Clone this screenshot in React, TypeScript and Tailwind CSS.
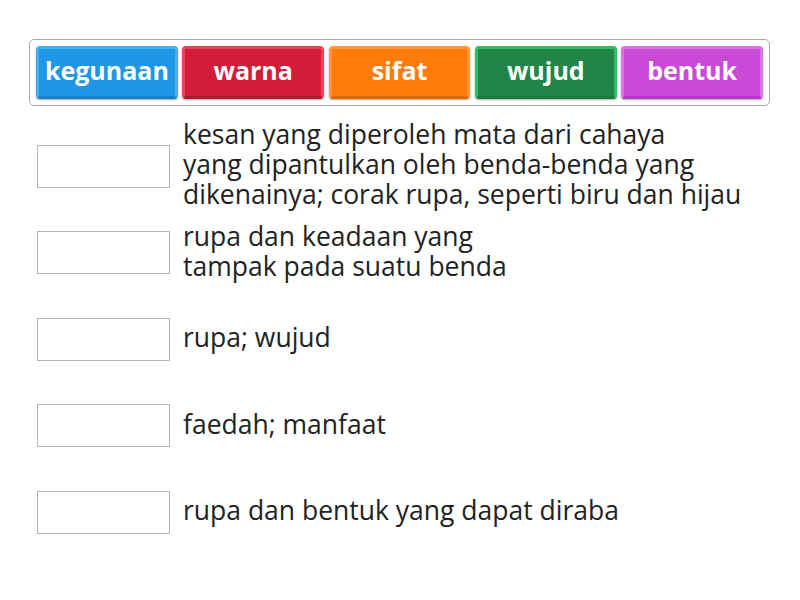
const tiles = [
  { label: 'kegunaan', face: 'bg-[#1f96e6]', edge: 'border-[#45b0f0] border-b-[#1780c8]' },
  { label: 'warna', face: 'bg-[#d21c38]', edge: 'border-[#e2485c] border-b-[#b3162e]' },
  { label: 'sifat', face: 'bg-[#ff7b0a]', edge: 'border-[#ff9a3c] border-b-[#e06800]' },
  { label: 'wujud', face: 'bg-[#228447]', edge: 'border-[#2dbf68] border-b-[#1c7a40]' },
  { label: 'bentuk', face: 'bg-[#c94ad6]', edge: 'border-[#d975e3] border-b-[#b338c2]' },
];

const rows = [
  [
    'kesan yang diperoleh mata dari cahaya',
    'yang dipantulkan oleh benda-benda yang',
    'dikenainya; corak rupa, seperti biru dan hijau',
  ],
  ['rupa dan keadaan yang', 'tampak pada suatu benda'],
  ['rupa; wujud'],
  ['faedah; manfaat'],
  ['rupa dan bentuk yang dapat diraba'],
];

export default function App() {
  return (
    <div className="w-[800px] h-[600px] bg-white font-['Open_Sans',sans-serif] text-[#222]">
      <div className="pt-[39px] pl-[29px]">
        <div className="w-[741px] h-[67px] border border-[#a9a9a9] rounded-[5px] px-[6px] pt-[6px] flex gap-[4.5px]">
          {tiles.map((t) => (
            <div
              key={t.label}
              className={`w-[142px] h-[53px] rounded-[4px] border-[3px] ${t.edge} ${t.face} shadow-[0_1px_2px_rgba(0,0,0,0.35)] flex items-center justify-center pb-[4px] text-white font-bold text-[25px] leading-none`}
            >
              {t.label}
            </div>
          ))}
        </div>
      </div>

      <div className="pt-[17px] pl-[37px]">
        {rows.map((lines, i) => (
          <div key={i} className="h-[86.5px] flex items-center gap-[13px]">
            <div className="w-[133px] h-[43px] shrink-0 border border-[#b4b4b4] bg-white" />
            <div className="text-[26.5px] leading-[30px] whitespace-nowrap pb-[4px]">
              {lines.map((l) => (
                <div key={l}>{l}</div>
              ))}
            </div>
          </div>
        ))}
      </div>
    </div>
  );
}
